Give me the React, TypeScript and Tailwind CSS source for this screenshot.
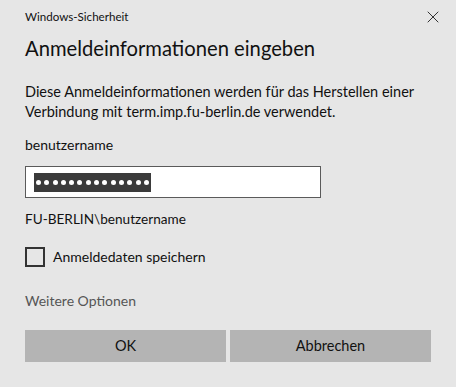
import { X } from 'lucide-react';

export default function App() {
  const font = { fontFamily: 'Lato, "Noto Sans", sans-serif' };
  return (
    <div className="w-[456px] h-[387px] bg-[#e6e6e6] text-[#111] px-[25px] overflow-hidden" style={font}>
      {/* Title bar */}
      <div className="h-[34px] flex items-center justify-between">
        <span className="text-[11.6px]">Windows-Sicherheit</span>
        <X className="w-[20px] h-[20px] mr-[-12px] text-[#222]" strokeWidth={1.1} />
      </div>

      <h1 className="text-[20.2px] leading-[28px] font-normal">Anmeldeinformationen eingeben</h1>

      <p className="mt-[20px] text-[14.5px] leading-[20px]">
        Diese Anmeldeinformationen werden für das Herstellen einer Verbindung mit term.imp.fu-berlin.de verwendet.
      </p>

      <div className="mt-[13px] text-[14px] leading-[20px]">benutzername</div>

      <div className="mt-[11px] w-[296px] h-[32px] bg-white border border-[#5a5a5a] flex items-center pl-[8px]">
        <div className="h-[19px] bg-[#3b3b3b] flex items-center gap-[3.3px] px-[2px]">
          {Array.from({ length: 14 }).map((_, i) => (
            <span key={i} className="w-[5px] h-[5px] rounded-full bg-white" />
          ))}
        </div>
      </div>

      <div className="mt-[11px] text-[13.6px] leading-[20px]">FU-BERLIN\benutzername</div>

      <label className="mt-[18px] flex items-center gap-[8px]">
        <span className="w-[20px] h-[20px] border-2 border-[#333] bg-[#e6e6e6]" />
        <span className="text-[14px] leading-[20px]">Anmeldedaten speichern</span>
      </label>

      <div className="mt-[24px] text-[14px] leading-[20px] text-[#555]">Weitere Optionen</div>

      <div className="mt-[19px] flex gap-[4px]">
        <button className="w-[201px] h-[32px] bg-[#b4b4b4] text-[14.5px]">OK</button>
        <button className="w-[201px] h-[32px] bg-[#b4b4b4] text-[14.5px]">Abbrechen</button>
      </div>
    </div>
  );
}
